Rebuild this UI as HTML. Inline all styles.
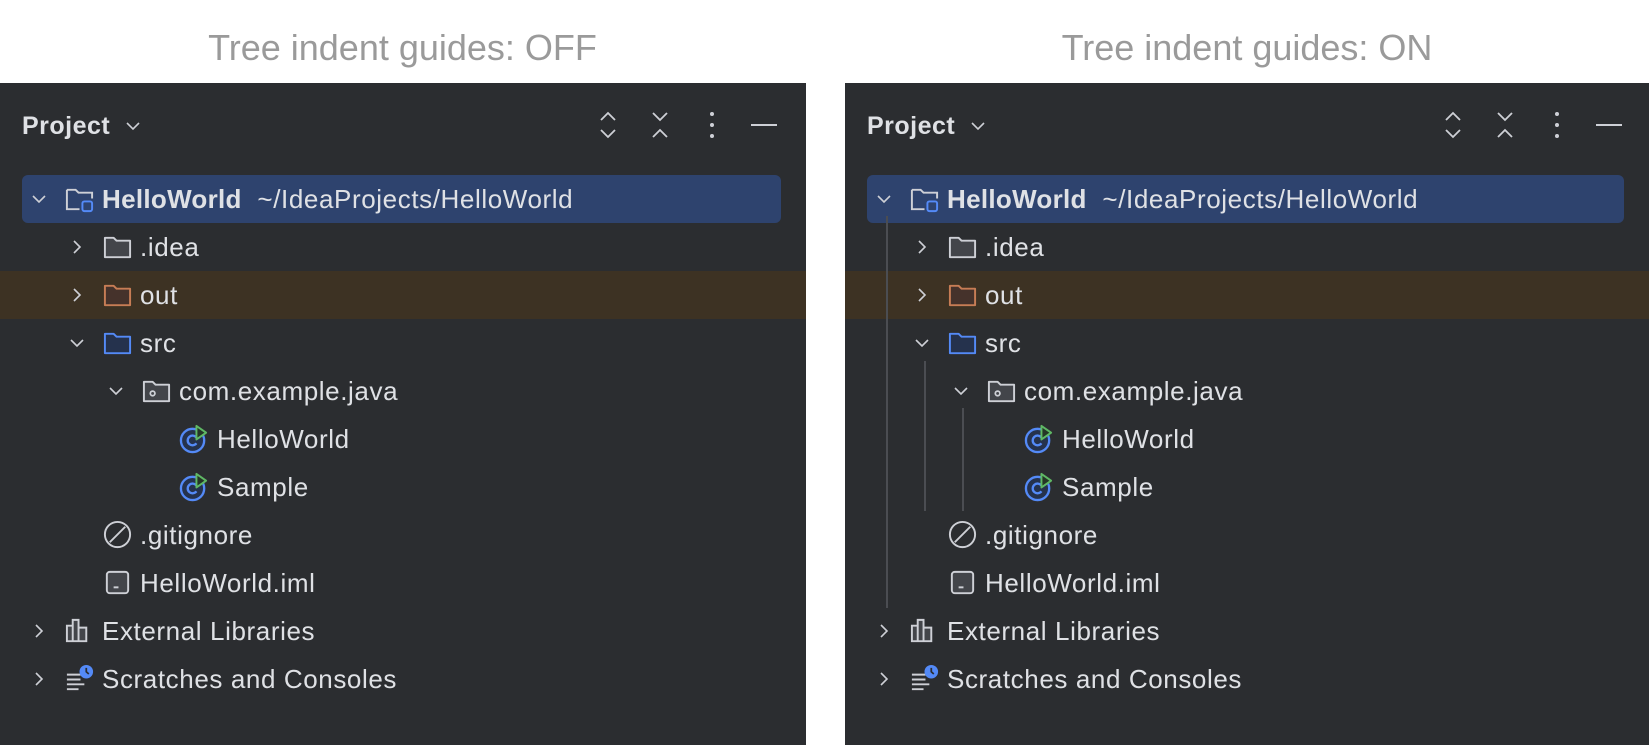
<!DOCTYPE html>
<html><head><meta charset="utf-8"><style>
*{margin:0;padding:0;box-sizing:border-box}
body{width:1649px;height:745px;background:#fff;position:relative;overflow:hidden;font-family:"Liberation Sans",sans-serif}
.title{position:absolute;top:27px;font-size:36px;color:#9a9a9a;text-align:center;width:805px}
.panel{position:absolute;top:83px;height:662px;background:#2b2d30;overflow:hidden}
.abs{position:absolute}
.hdr{position:absolute;left:22px;top:29px;font-size:25px;font-weight:bold;color:#dfe1e5;letter-spacing:0.5px}
.row{position:absolute;left:0;right:0;height:48px}
.t{position:absolute;top:9px;font-size:26px;color:#dfe1e5;white-space:nowrap;letter-spacing:0.6px}
.ic{position:absolute;top:8px;width:31px;height:31px}
.ch{position:absolute;top:14px;width:20px;height:20px}
.sel{position:absolute;left:22px;right:25px;top:92px;height:48px;background:#2e436e;border-radius:6px}
.out{position:absolute;left:0;right:0;top:188px;height:48px;background:#3d3223}
.g{position:absolute;width:2px;background:#4b4d52}
</style></head><body>
<div class="title" style="left:0">Tree indent guides: OFF</div>
<div class="title" style="left:845px;width:804px">Tree indent guides: ON</div>

<div class="panel" id="p1" style="left:0;width:806px">
PANEL
</div>
<div class="panel" id="p2" style="left:845px;width:804px">
PANEL
<div class="g" style="left:41px;top:133px;height:392px"></div>
<div class="g" style="left:79px;top:278px;height:150px"></div>
<div class="g" style="left:117px;top:325px;height:103px"></div>
</div>
<script>
var chD='<svg class="ch" viewBox="0 0 20 20"><path d="M4 7l6 6 6-6" fill="none" stroke="#ced0d6" stroke-width="1.6"/></svg>';
var chR='<svg class="ch" viewBox="0 0 20 20"><path d="M7 4l6 6-6 6" fill="none" stroke="#ced0d6" stroke-width="1.6"/></svg>';
function fold(st,fi){return '<svg viewBox="0 0 16 16" width="31" height="31"><path d="M1.5 3.5h4.5l1.5 1.5h7v8.5h-13z" fill="'+fi+'" stroke="'+st+'" stroke-width="1" stroke-linejoin="round"/></svg>';}
var icons={
proj:'<svg viewBox="0 0 16 16" width="31" height="31"><path d="M1.5 3.5h4.5l1.5 1.5h7v3M8 13.5h-6.5v-10" fill="none" stroke="#ced0d6" stroke-width="1"/><rect x="9.5" y="9.5" width="5" height="5" rx="1" fill="#2e436e" stroke="#548af7" stroke-width="1"/></svg>',
idea:fold('#ced0d6','#43454a'),
out:fold('#c77d55','#45322b'),
src:fold('#548af7','#25324d'),
pkg:'<svg viewBox="0 0 16 16" width="31" height="31"><path d="M1.5 3.5h4.5l1.5 1.5h7v8.5h-13z" fill="#43454a" stroke="#ced0d6" stroke-width="1" stroke-linejoin="round"/><circle cx="6" cy="9.5" r="1.2" fill="none" stroke="#ced0d6" stroke-width="0.9"/></svg>',
cls:'<svg viewBox="0 0 16 16" width="31" height="31"><circle cx="7" cy="9" r="6" fill="#25324d" stroke="#548af7" stroke-width="1.2"/><path d="M9 7.5a2.5 2.5 0 1 0 0 3" fill="none" stroke="#548af7" stroke-width="1.2"/><path d="M9 1.5v7l5-3.5z" fill="#253627" stroke="#5fb865" stroke-width="1" stroke-linejoin="round"/></svg>',
git:'<svg viewBox="0 0 16 16" width="31" height="31"><circle cx="8" cy="8" r="6.5" fill="none" stroke="#ced0d6" stroke-width="1"/><path d="M4 12L12 4" stroke="#ced0d6" stroke-width="1"/></svg>',
iml:'<svg viewBox="0 0 16 16" width="31" height="31"><rect x="2.5" y="2.5" width="11" height="11" rx="1.5" fill="#43454a" stroke="#ced0d6" stroke-width="1"/><path d="M6 10.5h2.5" stroke="#ced0d6" stroke-width="1"/></svg>',
lib:'<svg viewBox="0 0 16 16" width="31" height="31"><path d="M1.5 5.5h3v8h-3zM4.5 2.5h3v11h-3zM7.5 6.5h4v7h-4z" fill="#43454a" stroke="#ced0d6" stroke-width="1"/></svg>',
scr:'<svg viewBox="0 0 16 16" width="31" height="31"><path d="M1.5 6h7M1.5 8.5h7M1.5 11h9M1.5 13.5h6" stroke="#ced0d6" stroke-width="1"/><circle cx="11.5" cy="4.5" r="3.5" fill="#548af7"/><path d="M11.5 2.5v2l1.3 1.2" fill="none" stroke="#2b2d30" stroke-width="0.9"/></svg>'
};
var rows=[
[0,'d','proj','<b style="letter-spacing:0.3px">HelloWorld</b>&nbsp; <span>~/IdeaProjects/HelloWorld</span>'],
[1,'r','idea','.idea'],[1,'r','out','out'],[1,'d','src','src'],
[2,'d','pkg','com.example.java'],[3,'','cls','HelloWorld'],[3,'','cls','Sample'],
[1,'','git','.gitignore'],[1,'','iml','HelloWorld.iml'],
[0,'r','lib','External Libraries'],[0,'r','scr','Scratches and Consoles']];
var html='<div class="sel"></div><div class="out"></div>'+
'<div class="hdr">Project <svg width="18" height="18" viewBox="0 0 18 18" style="margin-left:6px;vertical-align:-1px"><path d="M3 6l6 6 6-6" fill="none" stroke="#ced0d6" stroke-width="1.6"/></svg></div>'+
'<svg class="abs" style="left:598px;top:27px" width="20" height="30" viewBox="0 0 20 30"><path d="M3 10l7-7 7 7M3 20l7 7 7-7" fill="none" stroke="#ced0d6" stroke-width="1.8"/></svg>'+
'<svg class="abs" style="left:650px;top:27px" width="20" height="30" viewBox="0 0 20 30"><path d="M3 3l7 7 7-7M3 27l7-7 7 7" fill="none" stroke="#ced0d6" stroke-width="1.8"/></svg>'+
'<svg class="abs" style="left:707px;top:28px" width="10" height="30" viewBox="0 0 10 30"><circle cx="5" cy="3" r="2" fill="#ced0d6"/><circle cx="5" cy="14" r="2" fill="#ced0d6"/><circle cx="5" cy="25" r="2" fill="#ced0d6"/></svg>'+
'<div class="abs" style="left:751px;top:41px;width:26px;height:2px;background:#ced0d6"></div>';
var tx=[102,140,179,217];
rows.forEach(function(r,i){
 var top=92+i*48,l=r[0],x=tx[l];
 html+='<div class="row" style="top:'+top+'px">';
 if(r[1])html+=(r[1]=='d'?chD:chR).replace('class="ch"','class="ch" style="left:'+(x-73)+'px"');
 html+='<div class="ic" style="left:'+(x-38)+'px">'+icons[r[2]]+'</div>';
 html+='<div class="t" style="left:'+x+'px">'+r[3]+'</div></div>';
});
['p1','p2'].forEach(function(id){var p=document.getElementById(id);p.innerHTML=p.innerHTML.replace('PANEL',html);});
</script>
</body></html>
